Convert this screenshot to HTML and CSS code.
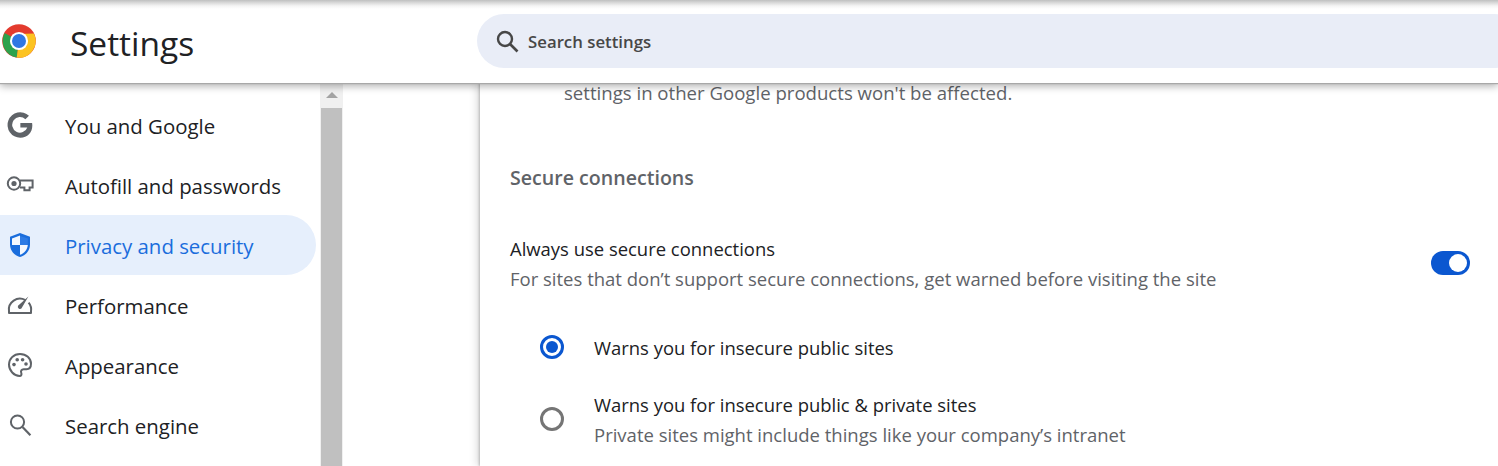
FILE: index.html
```html
<!DOCTYPE html>
<html lang="en">
<head>
  <meta charset="UTF-8">
  <meta name="viewport" content="width=device-width, initial-scale=1.0">
  <title>Settings</title>
  <link rel="stylesheet" href="styles.css">
</head>
<body>
  <header class="topbar">
    <div class="brand">
      <svg class="chrome-logo" viewBox="0 0 36 36" width="34" height="34" aria-hidden="true">
        <circle cx="18" cy="18" r="17.8" fill="#e33b2e"/>
        <path d="M18 18 L2.8 9.6 A17.8 17.8 0 0 0 15.6 35.6 Z" fill="#2ca24c"/>
        <path d="M18 10.5 L33.8 10.1 A17.8 17.8 0 0 1 15.6 35.6 L18 18 Z" fill="#fcc321"/>
        <circle cx="18" cy="18" r="9.6" fill="#fff"/>
        <circle cx="18" cy="18" r="7.4" fill="#2f77e4"/>
      </svg>
      <h1 class="brand-title">Settings</h1>
    </div>
    <div class="search">
      <svg class="search-icon" viewBox="0 0 24 24" width="24" height="24" aria-hidden="true">
        <circle cx="10" cy="10" r="7" fill="none" stroke="#474747" stroke-width="2.4"/>
        <path d="M15 15 L22.5 22.5" stroke="#474747" stroke-width="2.6" fill="none"/>
      </svg>
      <span class="search-text">Search settings</span>
    </div>
  </header>

  <div class="content">
    <nav class="sidebar">
      <a class="nav-item">
        <svg class="nav-icon" viewBox="2 2.3 23.4 23.4" aria-hidden="true">
          <path d="M24 14.4 C24 20.4 20 24.6 14 24.6 A10.6 10.6 0 1 1 21.2 6.3 L18.2 9.2 A6.5 6.5 0 1 0 19.8 16 H14 V12.4 H23.8 C23.9 13 24 13.7 24 14.4 Z" fill="#5f6368"/>
        </svg>
        <span>You and Google</span>
      </a>
      <a class="nav-item">
        <svg class="nav-icon" viewBox="0 0 28 28" aria-hidden="true">
          <circle cx="8" cy="12.5" r="6.2" fill="none" stroke="#5f6368" stroke-width="2"/>
          <circle cx="8" cy="12.5" r="2.6" fill="#5f6368"/>
          <path d="M14 9.5 H26.6 V16.4 H23.6 V19.2 H18.4 V16.4 H14" fill="none" stroke="#5f6368" stroke-width="2"/>
        </svg>
        <span>Autofill and passwords</span>
      </a>
      <a class="nav-item nav-item-active">
        <svg class="nav-icon" viewBox="0 0 28 28" aria-hidden="true">
          <path d="M14 2 L24 5.8 V13.5 C24 19.4 19.8 24.6 14 26 C8.2 24.6 4 19.4 4 13.5 V5.8 Z" fill="#1a6ddc"/>
          <path d="M14 5 V14 H21.8 V7.6 Z" fill="#2d7be5"/>
          <path d="M14 4.6 L6 7.6 V14 H14 Z M14 14 H21.8 C21.4 18.5 18.4 22.4 14 23.8 Z" fill="#f4f8fe"/>
        </svg>
        <span>Privacy and security</span>
      </a>
      <a class="nav-item">
        <svg class="nav-icon" viewBox="0 0 28 28" aria-hidden="true">
          <path d="M19.4 9.2 A11 11 0 0 0 3 20.4 V22 H25 V20.4 A11 11 0 0 0 22.6 11.6" fill="none" stroke="#5f6368" stroke-width="2" stroke-linejoin="round"/>
          <path d="M22.4 5.6 L15.4 17.6 A2.3 2.3 0 0 1 12 14.8 Z" fill="#5f6368"/>
        </svg>
        <span>Performance</span>
      </a>
      <a class="nav-item">
        <svg class="nav-icon" viewBox="0 0 28 28" aria-hidden="true">
          <path d="M14 3 C7.6 3 3 7.8 3 13.6 C3 19.6 8 25 13.6 25 C15.4 25 15.8 23.4 15.3 22.2 C14.4 20 15.6 18.2 17.6 18.2 H20.4 C23.4 18.2 25 16 25 12.8 C25 7.2 20.2 3 14 3 Z" fill="none" stroke="#5f6368" stroke-width="2"/>
          <circle cx="8" cy="13.6" r="1.8" fill="#5f6368"/>
          <circle cx="11.2" cy="8.8" r="1.8" fill="#5f6368"/>
          <circle cx="16.6" cy="8.8" r="1.8" fill="#5f6368"/>
          <circle cx="20" cy="13" r="1.8" fill="#5f6368"/>
        </svg>
        <span>Appearance</span>
      </a>
      <a class="nav-item">
        <svg class="nav-icon" viewBox="0 0 28 28" aria-hidden="true">
          <circle cx="11.5" cy="11" r="6.6" fill="none" stroke="#5f6368" stroke-width="2"/>
          <path d="M16.5 16 L24.4 24.2" stroke="#5f6368" stroke-width="2.2" fill="none"/>
        </svg>
        <span>Search engine</span>
      </a>
    </nav>

    <div class="scrollbar">
      <div class="scroll-arrow"></div>
      <div class="scroll-thumb"></div>
    </div>

    <main class="card">
      <p class="card-cutoff">settings in other Google products won't be affected.</p>
      <h2 class="section-title">Secure connections</h2>

      <div class="toggle-row">
        <div class="row-text">
          <div class="row-label">Always use secure connections</div>
          <div class="row-sub">For sites that don’t support secure connections, get warned before visiting the site</div>
        </div>
        <div class="toggle"><div class="toggle-knob"></div></div>
      </div>

      <div class="radio-row radio-row-first">
        <div class="radio radio-on"><div class="radio-dot"></div></div>
        <div class="row-label">Warns you for insecure public sites</div>
      </div>
      <div class="radio-row">
        <div class="radio"></div>
        <div class="row-text">
          <div class="row-label">Warns you for insecure public &amp; private sites</div>
          <div class="row-sub">Private sites might include things like your company’s intranet</div>
        </div>
      </div>
    </main>
  </div>
</body>
</html>
```

FILE: styles.css
```css
/* Page */
html, body {
  margin: 0;
  padding: 0;
  height: 466px;
  overflow: hidden;
  background: #fff;
}
body {
  font-family: "Open Sans", "Noto Sans", Arial, sans-serif;
  color: #202124;
  display: flex;
  flex-direction: column;
}

/* Top bar */
.topbar {
  position: relative;
  z-index: 2;
  flex: none;
  box-sizing: border-box;
  height: 83px;
  display: flex;
  align-items: flex-start;
  padding-top: 14px;
  background: linear-gradient(#bfc0c0, #dcdcdc 3px, #f5f5f5 6px, #fff 9px);
  box-shadow: 0 1px 1px #a8a8a8, 0 3px 8px rgba(0, 0, 0, .32);
}
.brand {
  flex: none;
  width: 477px;
  box-sizing: border-box;
  padding-left: 2px;
  padding-top: 10px;
  display: flex;
  align-items: flex-start;
}
.chrome-logo {
  flex: none;
}
.brand-title {
  margin: 0 0 0 34px;
  font-size: 33.5px;
  font-weight: 500;
  line-height: 38px;
  color: #202124;
}
.search {
  flex: 1;
  height: 54px;
  margin-right: -23px;
  display: flex;
  align-items: center;
  padding-left: 18px;
  gap: 9px;
  background: #e9edf7;
  border-radius: 27px;
}
.search-icon {
  flex: none;
}
.search-text {
  font-size: 16.8px;
  font-weight: 600;
  color: #474747;
}

/* Below the bar */
.content {
  flex: 1;
  min-height: 0;
  display: flex;
}

/* Sidebar */
.sidebar {
  flex: none;
  width: 320px;
  padding-top: 12px;
  box-sizing: border-box;
}
.nav-item {
  height: 60px;
  width: 316px;
  box-sizing: border-box;
  display: flex;
  align-items: center;
  padding-left: 6px;
  gap: 31px;
  font-size: 20.4px;
  font-weight: 500;
  color: #202124;
  border-radius: 0 30px 30px 0;
}
.nav-item span {
  padding-top: 2px;
}
.nav-icon {
  flex: none;
  width: 28px;
  height: 28px;
}
.nav-item-active {
  background: #e6effc;
  color: #1a6ddc;
}

/* Scrollbar */
.scrollbar {
  flex: none;
  width: 23px;
  background: #f0f0f0;
  display: flex;
  flex-direction: column;
}
.scroll-arrow {
  flex: none;
  height: 25px;
  display: flex;
}
.scroll-arrow::before {
  content: "";
  margin: 9px auto 0;
  width: 0;
  height: 0;
  border-left: 6px solid transparent;
  border-right: 6px solid transparent;
  border-bottom: 6px solid #a3a3a3;
}
.scroll-thumb {
  flex: 1;
  margin: 0 1px;
  background: #c0c0c0;
}

/* Main card */
.card {
  flex: 1;
  margin-left: 137px;
  padding-left: 30px;
  padding-right: 28px;
  background: #fff;
  box-shadow: -1px 0 2px #bbb, -3px 0 8px rgba(0, 0, 0, .15);
}
.card-cutoff {
  margin: 0;
  padding-left: 54px;
  font-size: 18.6px;
  line-height: 20px;
  color: #5f6368;
}
.section-title {
  margin: 60px 0 0;
  font-size: 19.6px;
  font-weight: 600;
  line-height: 30px;
  color: #5f6368;
}
.toggle-row {
  margin-top: 41px;
  display: flex;
  align-items: center;
  justify-content: space-between;
}
.row-label {
  font-size: 18.45px;
  line-height: 30px;
  color: #202124;
}
.row-sub {
  font-size: 18.5px;
  line-height: 30px;
  color: #5f6368;
}
.toggle {
  flex: none;
  box-sizing: border-box;
  width: 39px;
  height: 24px;
  margin-bottom: 2px;
  padding: 3px;
  display: flex;
  justify-content: flex-end;
  background: #0b57d0;
  border-radius: 12px;
}
.toggle-knob {
  width: 18px;
  height: 18px;
  background: #fff;
  border-radius: 50%;
}
.radio-row {
  display: flex;
  align-items: center;
  padding-left: 30px;
  gap: 30px;
  margin-top: 27px;
}
.radio-row-first {
  margin-top: 39px;
}
.radio {
  flex: none;
  box-sizing: border-box;
  width: 24px;
  height: 24px;
  margin-bottom: 2px;
  border: 3px solid #757575;
  border-radius: 50%;
  display: flex;
  align-items: center;
  justify-content: center;
}
.radio-on {
  border-color: #0b57d0;
}
.radio-dot {
  width: 12px;
  height: 12px;
  background: #0b57d0;
  border-radius: 50%;
}
```
